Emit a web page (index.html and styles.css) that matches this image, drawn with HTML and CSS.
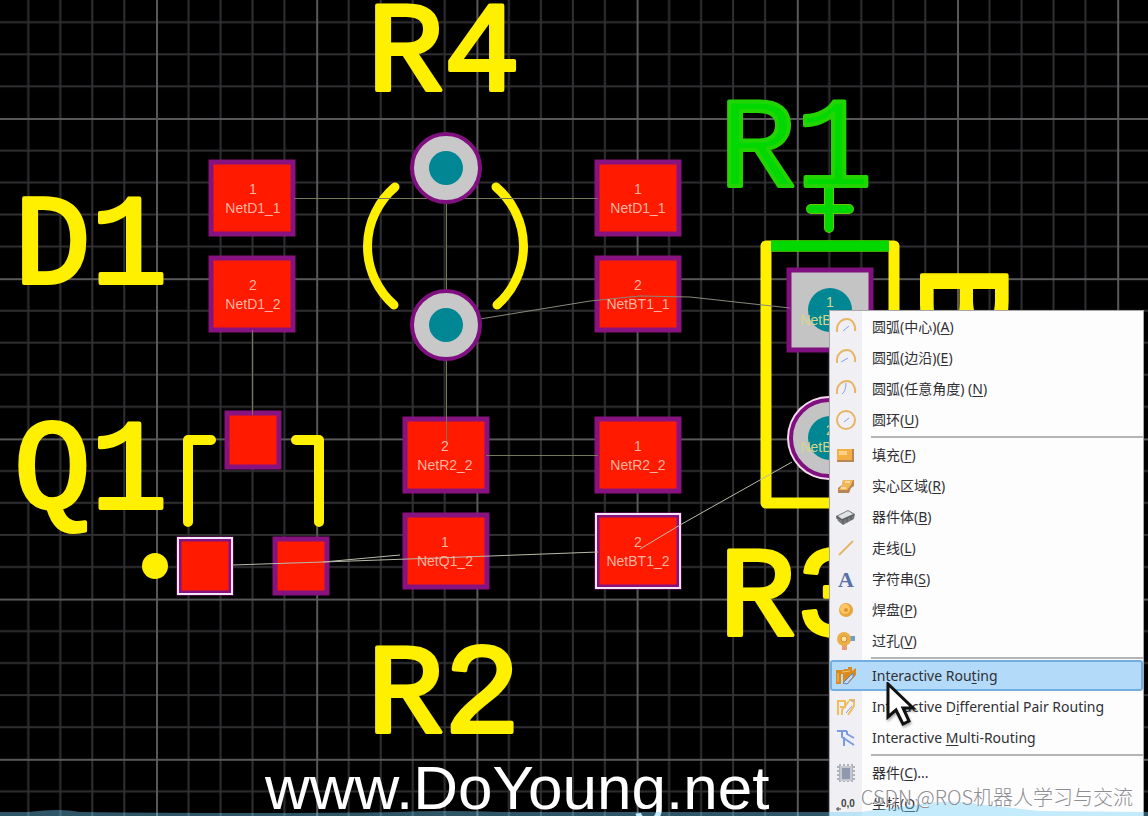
FILE: index.html
```
<!DOCTYPE html>
<html lang="zh-CN">
<head>
  <meta charset="UTF-8" />
  <meta name="viewport" content="width=device-width, initial-scale=1.0"/>
  <title>PCB Layout</title>
  <link rel="stylesheet" href="styles.css">
</head>
<body>
  <main class="board">
    <svg class="canvas" aria-label="PCB canvas">
      <defs>
        <!-- 5x5 grid cells, one bright line per block -->
        <pattern id="grid" x="156" y="118" width="160.2" height="160.2" patternUnits="userSpaceOnUse">
          <path class="minor" d="M32.5 0V161M64.5 0V161M96.5 0V161M128.5 0V161M0 32.5H161M0 64.5H161M0 96.5H161M0 128.5H161"/>
          <path class="major" d="M1 0V161M0 1H161"/>
        </pattern>
        <rect id="pad" class="pad" x="2" y="2" width="82" height="72"/>
        <rect id="smallPad" class="pad" x="2" y="2" width="52" height="54"/>
        <g id="via">
          <circle class="via-ring" r="34"/>
          <circle class="hole" r="17"/>
        </g>
      </defs>
      <rect width="100%" height="100%" fill="url(#grid)"/>

      <!-- Pads -->
      <use href="#pad" x="209" y="160"/>
      <use href="#pad" x="209" y="256"/>
      <use href="#pad" x="595" y="160"/>
      <use href="#pad" x="595" y="256"/>
      <use href="#pad" x="403" y="417"/>
      <use href="#pad" x="403" y="513"/>
      <use href="#pad" x="595" y="417"/>
      <use href="#pad" x="595" y="513"/>
      <rect class="selected" x="596" y="514" width="84" height="74"/>
      <use href="#smallPad" x="225" y="411"/>
      <use href="#smallPad" x="177" y="537"/>
      <use href="#smallPad" x="273" y="537"/>
      <rect class="selected" x="178" y="538" width="54" height="56"/>
      <rect class="bt-pad" x="789" y="270" width="82" height="80"/>
      <circle class="hole" cx="830" cy="310" r="22"/>
      <circle class="bt-halo" cx="829" cy="438" r="42"/>
      <circle class="bt-pad bt-round" cx="829" cy="438" r="38"/>
      <circle class="hole" cx="830" cy="438" r="22"/>

      <!-- Silkscreen outlines -->
      <path class="silk arc" d="M395 187A78 78 0 0 0 394 305M496 187A78 78 0 0 1 497 305"/>
      <path class="silk" d="M211 440H188V522M296 440H319V522"/>
      <circle class="dot" cx="155" cy="566" r="13"/>
      <path class="silk box" d="M766 503V246H894V503Z"/>
      <path class="silk box green" d="M771 246H889"/>
      <path class="plus-edge" d="M829 185V228M811 209H849"/>
      <path class="plus" d="M829 185V228M811 209H849"/>

      <!-- Ratsnest -->
      <path class="net" d="M294 198.500H598M446.500 190V446M252.500 330V415M486 455.500H598"/>
      <path class="net light" d="M480 319L590 301L640 296L690 297L790 308"/>
      <path class="net bright" d="M232 565L323 562L408 559L490 556L598 552M323 562L400 555M640 549L680 525L792 462"/>
      <use href="#via" x="446" y="168"/>
      <use href="#via" x="446" y="325"/>

      <!-- Pad labels -->
      <g class="label">
        <text x="253" y="194">1</text><text x="253" y="213">NetD1_1</text>
        <text x="253" y="290">2</text><text x="253" y="309">NetD1_2</text>
        <text x="638" y="194">1</text><text x="638" y="213">NetD1_1</text>
        <text x="638" y="290">2</text><text x="638" y="309">NetBT1_1</text>
        <text x="445" y="451">2</text><text x="445" y="470">NetR2_2</text>
        <text x="638" y="451">1</text><text x="638" y="470">NetR2_2</text>
        <text x="445" y="547">1</text><text x="445" y="566">NetQ1_2</text>
        <text x="638" y="547">2</text><text x="638" y="566">NetBT1_2</text>
      </g>
      <g class="label bt-label">
        <text x="830" y="307">1</text><text x="832" y="325">NetBT1_1</text>
        <text x="830" y="435">2</text><text x="832" y="452">NetBT1_2</text>
      </g>

      <!-- Designators -->
      <g class="ref">
        <text x="14" y="283">D1</text>
        <text x="367" y="90">R4</text>
        <text x="14" y="508">Q1</text>
        <text x="367" y="732">R2</text>
        <text x="719" y="635">R3</text>
        <text class="picked" x="719" y="186">R1</text>
        <text x="265" y="-922" transform="rotate(90)">B</text>
      </g>
      <text class="site" x="265" y="809">www.DoYoung.net</text>
    </svg>

    <nav class="menu" aria-label="放置">
      <button class="item"><svg class="icon"><path class="gold" d="M1 15C0 6 6 2 11 2S20 8 19 14"/><path class="blue" d="M7 14L13 9"/></svg><span>圆弧(中心)(<u>A</u>)</span></button>
      <button class="item"><svg class="icon"><path class="gold" d="M1 15C0 6 6 2 11 2S20 8 19 14"/><path class="blue" d="M5 14L12 10"/></svg><span>圆弧(边沿)(<u>E</u>)</span></button>
      <button class="item"><svg class="icon"><path class="gold" d="M1 15C0 6 6 2 11 2S20 8 19 14"/><path class="blue" d="M6 15Q10 12 10 4"/></svg><span>圆弧(任意角度) (<u>N</u>)</span></button>
      <button class="item"><svg class="icon"><circle class="gold" cx="10" cy="10" r="9"/><path class="blue" d="M8 12L13 8"/></svg><span>圆环(<u>U</u>)</span></button>
      <hr>
      <button class="item"><svg class="icon"><path fill="#b78558" d="M1 4H18V17H1Z"/><path fill="#f3af43" d="M1 4H16V15H1Z"/><path fill="#ffd28a" d="M3 6H11V10H3Z"/></svg><span>填充(<u>F</u>)</span></button>
      <button class="item"><svg class="icon"><path fill="#b78558" d="M7 4H18V10L15 12L13 17H2V12L6 9Z"/><path fill="#f5b656" d="M7 4H17L15 9L11 14H3L6 9Z"/><path class="shine" d="M9 6H14M5 12H10"/></svg><span>实心区域(<u>R</u>)</span></button>
      <button class="item"><svg class="icon"><path fill="#777b80" d="M0 9L12 3L19 7L18 12L7 18L2 14Z"/><path fill="#dfe3e5" d="M2 9L12 4L17 7L6 12Z"/><path fill="none" stroke="#555" d="M1 10L6 13L18 8M7 13V17M11 11V15M15 9V13M1 9V12"/></svg><span>器件体(<u>B</u>)</span></button>
      <button class="item"><svg class="icon"><path class="gold" d="M3 17L17 3"/></svg><span>走线(<u>L</u>)</span></button>
      <button class="item"><svg class="icon"><text class="letter" x="10" y="18">A</text></svg><span>字符串(<u>S</u>)</span></button>
      <button class="item"><svg class="icon"><circle cx="10" cy="10" r="7" fill="#e9a53b"/><circle cx="9" cy="9" r="5" fill="#ffc766"/><circle cx="10" cy="10" r="2" fill="#dd942c"/></svg><span>焊盘(<u>P</u>)</span></button>
      <button class="item"><svg class="icon"><path fill="#e99b72" d="M6 11H11V19H6Z"/><path fill="#6ba1c9" d="M12 5H19V10H12Z"/><circle cx="8" cy="8" r="7" fill="#edae43"/><circle cx="8" cy="8" r="3" fill="#ffe2a1" stroke="#c98f36"/></svg><span>过孔(<u>V</u>)</span></button>
      <hr>
      <button class="item active"><svg class="icon"><path fill="#d98b1f" d="M0 4H8V3H12V1H16V5L20 2V9L12 18H7V8H5V18H0Z"/><path fill="#c9dcf5" stroke="#5b83c8" d="M7 17L17 7V11L11 18Z"/><path fill="none" stroke="#f5c46f" d="M2 7V16M6 6L14 5"/></svg><span>Interactive Rou<u>t</u>ing</span></button>
      <button class="item"><svg class="icon"><path fill="none" stroke="#f0bd5d" stroke-width="2" d="M2 18V4H9V10H4M13 3H18V9L12 18M6 18V13L13 4"/><path class="blue" d="M10 16L16 9M15 4H18"/></svg><span>Interactive D<u>i</u>fferential Pair Routing</span></button>
      <button class="item"><svg class="icon"><path fill="none" stroke="#7d9be3" stroke-width="2" d="M1 3H11M6 3V9L18 17M8 18V9M11 3V6L18 10"/></svg><span>Interactive <u>M</u>ulti-Routing</span></button>
      <hr>
      <button class="item"><svg class="icon"><path stroke="#aeb1b8" stroke-width="18" stroke-dasharray="2 2" d="M10 3V18"/><path stroke="#aeb1b8" stroke-width="18" stroke-dasharray="2 2" d="M3 10H18"/><path fill="#c4c8d0" d="M4 3H16V18H4Z"/><path fill="#8f98ac" d="M6 5H14V16H6Z"/></svg><span>器件(<u>C</u>)...</span></button>
      <button class="item"><svg class="icon"><path fill="none" stroke="#444" d="M0 15H5M2 13V17"/><text class="coord" x="5" y="13">0,0</text></svg><span>坐标(<u>O</u>)</span></button>
    </nav>

    <svg class="cursor" viewBox="0 0 32 46"><path d="M2 2V35L10 28L17 42L23 39L17 26H27Z"/></svg>
    <svg class="wave" viewBox="0 0 1148 16" preserveAspectRatio="none"><path d="M0 12H28Q60 8 80 12Q250 14 400 12Q440 10 500 12L860 12L915 5Q950 -2 985 5L1040 11L1148 12V16H0Z"/></svg>
    <div class="watermark">CSDN @ROS机器人学习与交流</div>
  </main>
</body>
</html>
```
FILE: styles.css
```
body {
  margin: 0;
  background: #000;
  font-family: "Noto Sans", "Noto Sans CJK SC", sans-serif;
}
.board {
  position: relative;
  height: 100vh;
  overflow: hidden;
}
.canvas {
  display: block;
  width: 100%;
  height: 100%;
}

/* Grid */
.minor {
  stroke: #303033;
  stroke-width: 2;
}
.major {
  stroke: #58585b;
  stroke-width: 2;
}

/* Pads */
.pad {
  fill: #ff1a00;
  stroke: #88127f;
  stroke-width: 5;
}
.selected {
  fill: none;
  stroke: #f5e6f5;
  stroke-width: 2;
}
.bt-pad {
  fill: #c4c4c4;
  stroke: #80107f;
  stroke-width: 5;
}
.bt-round {
  stroke-width: 4;
}
.bt-halo {
  fill: #f5dcee;
}
.via-ring {
  fill: #c8c8c8;
  stroke: #80107f;
  stroke-width: 4;
}
.hole {
  fill: #008793;
}

/* Silkscreen */
.silk {
  fill: none;
  stroke: #fff000;
  stroke-width: 10;
  stroke-linecap: round;
  stroke-linejoin: round;
}
.arc {
  stroke-width: 9;
}
.box {
  stroke-width: 11;
}
.green {
  stroke: #00d800;
  stroke-linecap: butt;
}
.dot {
  fill: #fff000;
}
.plus,
.plus-edge {
  fill: none;
  stroke: #00d800;
  stroke-width: 8;
  stroke-linecap: round;
}
.plus-edge {
  stroke: #68cc00;
  stroke-width: 10;
}
.net {
  fill: none;
  stroke: #77775a;
}
.light {
  stroke: #88887a;
}
.bright {
  stroke: #b9b9a8;
}
.label {
  font-family: "Liberation Sans", sans-serif;
  font-size: 14px;
  fill: #ffb2a0;
  text-anchor: middle;
}
.bt-label {
  fill: #d5d68c;
}
.ref {
  font-family: "Liberation Mono", monospace;
  font-size: 128px;
  fill: #fff000;
  stroke: #fff000;
  stroke-width: 4;
  stroke-linejoin: round;
}
.picked {
  fill: #00d800;
  stroke: #22d400;
}
.site {
  font-family: "Liberation Sans", sans-serif;
  font-size: 62px;
  fill: #fff;
}

/* Context menu */
.menu {
  position: absolute;
  left: 829px;
  top: 310px;
  width: 315px;
  box-sizing: border-box;
  display: flex;
  flex-direction: column;
  border: 1px solid #a5a5aa;
  background: linear-gradient(to right, #f0f0f4 32px, #fefdfe 32px);
}
.item {
  display: flex;
  align-items: center;
  gap: 16px;
  height: 31px;
  box-sizing: border-box;
  padding: 0 5px;
  border: 1px solid transparent;
  background: none;
  color: #303034;
  font: inherit;
  font-size: 14px;
  line-height: 20px;
  text-align: left;
  white-space: nowrap;
}
.item u {
  text-underline-offset: 2px;
}
.active {
  border: 2px solid #72aee2;
  border-radius: 3px;
  padding: 0 4px;
  background: #b3daf9;
}
.menu hr {
  width: 272px;
  height: 2px;
  margin: 1px 0 1px auto;
  border: 0;
  background: #b5b5b8;
}
.icon {
  flex: none;
  width: 20px;
  height: 20px;
  overflow: visible;
}
.gold {
  fill: none;
  stroke: #e6b566;
  stroke-width: 2;
}
.blue {
  fill: none;
  stroke: #8c9ce8;
}
.shine {
  stroke: #ffdc9c;
  stroke-width: 2;
}
.letter {
  font-family: "Liberation Serif", serif;
  font-size: 22px;
  font-weight: bold;
  fill: #5871a8;
  text-anchor: middle;
}
.coord {
  font-family: "Liberation Sans", sans-serif;
  font-size: 10px;
  font-weight: bold;
  fill: #444;
}

/* Things floating over the menu */
.cursor {
  position: absolute;
  left: 886px;
  top: 682px;
  width: 32px;
  height: 46px;
  fill: #fff;
  stroke: #111;
  stroke-width: 3;
  filter: drop-shadow(1px 2px 1px rgba(0,0,0,0.3));
}
.wave {
  position: absolute;
  left: 0;
  bottom: 0;
  width: 100%;
  height: 16px;
  fill: rgba(115,208,248,0.41);
}
.watermark {
  position: absolute;
  right: 15px;
  bottom: 4px;
  font-family: "Noto Sans CJK SC", sans-serif;
  font-size: 20px;
  font-weight: 300;
  line-height: 30px;
  color: #8d8d92;
  text-shadow: -1px -1px 0 #fff;
}
```
